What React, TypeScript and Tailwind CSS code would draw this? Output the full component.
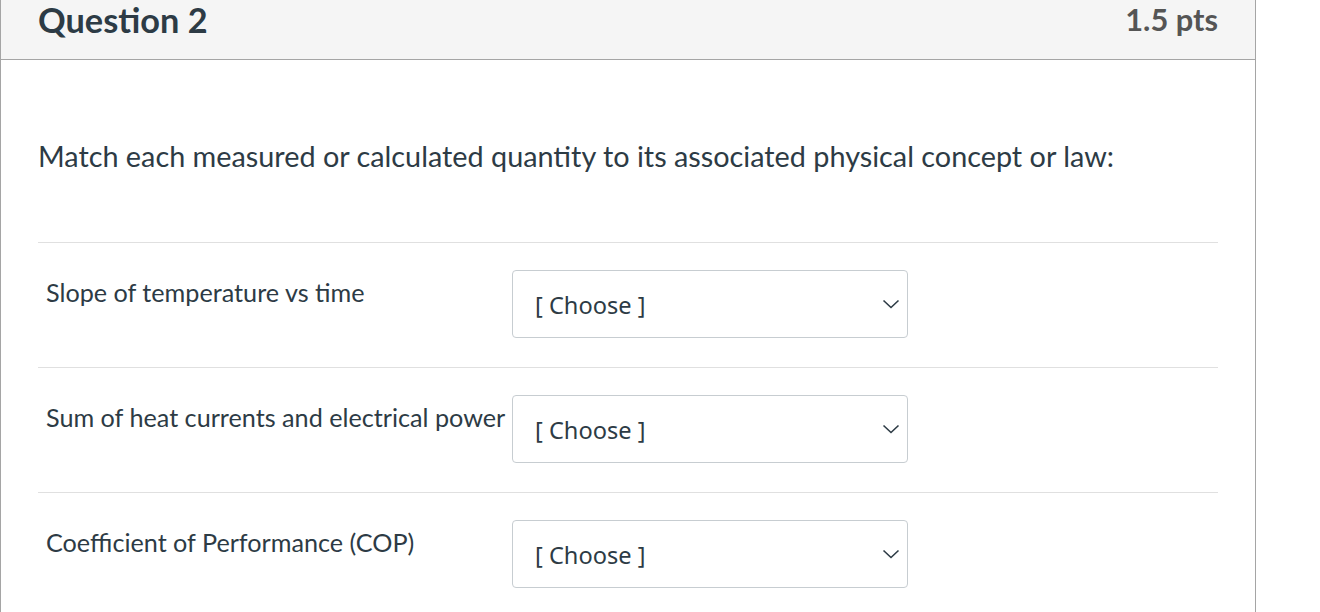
import React from 'react';

const rows = [
  'Slope of temperature vs time',
  'Sum of heat currents and electrical power',
  'Coefficient of Performance (COP)',
];

function ChooseSelect() {
  return (
    <div className="w-[396px] h-[68px] border border-[#c7cdd1] rounded-[4px] bg-white flex items-center justify-between pl-[22px] pr-[7px] mt-[27px]">
      <span className="text-[23.6px] text-[#2d3b45] font-['Noto_Sans',sans-serif] pt-[4px]">[ Choose ]</span>
      <svg width="18" height="10" viewBox="0 0 18 10" fill="none">
        <path d="M1.5 1.5 L9 8.5 L16.5 1.5" stroke="#2d3b45" strokeWidth="1.6" />
      </svg>
    </div>
  );
}

export default function App() {
  return (
    <div className="min-h-screen bg-white font-['Lato',sans-serif]">
      <div className="w-[1256px] border-l border-r border-[#a5a5a5] min-h-[612px]">
        {/* Шапка вопроса */}
        <div className="h-[60px] bg-[#f5f5f5] border-b border-[#a5a5a5] flex justify-between items-start px-[37px]">
          <h2 className="text-[34.3px] font-bold text-[#2d3b45] leading-[40px]">Question 2</h2>
          <span className="text-[30.8px] font-bold text-[#555] leading-[40px]">1.5 pts</span>
        </div>

        <div className="px-[37px]">
          <p className="text-[28.8px] text-[#2d3b45] mt-[76px] leading-[40px]">
            Match each measured or calculated quantity to its associated physical concept or law:
          </p>

          <div className="mt-[66px]">
            {rows.map((label) => (
              <div key={label} className="h-[125px] border-t border-[#e0e0e0] flex">
                <div className="w-[474px] pl-[8px] pt-[33px] text-[25.2px] leading-[32px] text-[#2d3b45] whitespace-nowrap">{label}</div>
                <ChooseSelect />
              </div>
            ))}
          </div>
        </div>
      </div>
    </div>
  );
}
